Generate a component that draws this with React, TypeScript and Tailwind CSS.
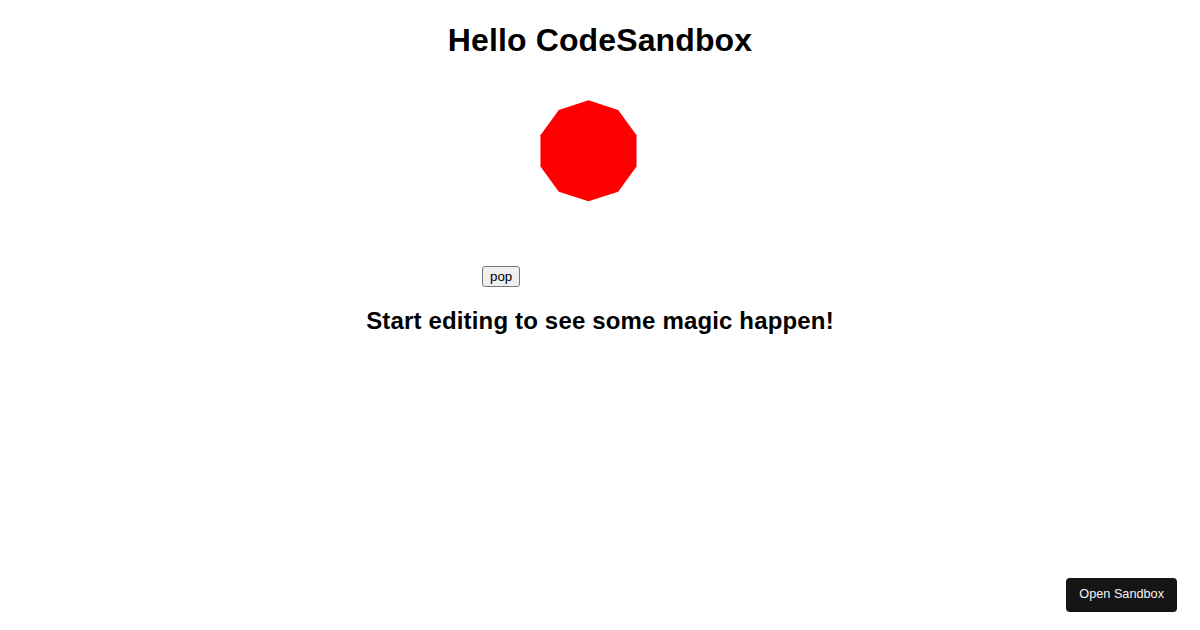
import React from "react";

const cx = 588.5;
const cy = 70.8;
const r = 50.5;
const points = Array.from({ length: 10 }, (_, i) => {
  const a = ((-90 + 36 * i) * Math.PI) / 180;
  return `${(cx + r * Math.cos(a)).toFixed(2)},${(cy + r * Math.sin(a)).toFixed(2)}`;
}).join(" ");

export default function App() {
  return (
    <div className="min-h-[630px] bg-white text-black font-['Liberation_Sans',Arial,sans-serif]">
      <div className="text-center pt-[0.1px]">
        <h1 className="text-[32px] font-bold leading-[normal] tracking-[0.12px] my-[21.44px]">Hello CodeSandbox</h1>
        <svg width="1200" height="186.3" viewBox="0 0 1200 186.3" className="block">
          <polygon points={points} fill="#ff0000" />
        </svg>
        <div className="flex pl-[482px]">
          <button className="h-[21px] px-[7px] text-[13.33px] leading-none text-black bg-[#efefef] border border-[#767676] rounded-[3px]">
            pop
          </button>
        </div>
        <h2 className="text-[24px] font-bold leading-[normal] tracking-[0.16px] my-[19.92px]">
          Start editing to see some magic happen!
        </h2>
      </div>
      <a className="fixed bottom-[18px] right-[23px] flex items-center h-[34px] px-[13px] rounded-[4px] bg-[#151515] text-[#f5f5f5] text-[12.7px] font-['Liberation_Sans',Arial,sans-serif]">
        Open Sandbox
      </a>
    </div>
  );
}
